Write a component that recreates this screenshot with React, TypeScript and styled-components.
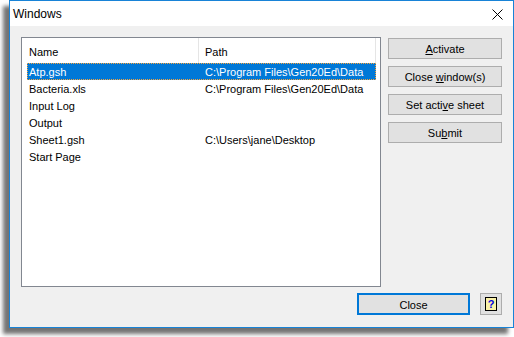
import React from 'react';
import styled, { createGlobalStyle } from 'styled-components';

type Item = {
  name: string;
  path: string;
};

const items: Item[] = [
  { name: 'Atp.gsh', path: 'C:\\Program Files\\Gen20Ed\\Data' },
  { name: 'Bacteria.xls', path: 'C:\\Program Files\\Gen20Ed\\Data' },
  { name: 'Input Log', path: '' },
  { name: 'Output', path: '' },
  { name: 'Sheet1.gsh', path: 'C:\\Users\\jane\\Desktop' },
  { name: 'Start Page', path: '' },
];

const GlobalStyle = createGlobalStyle`
  html, body {
    margin: 0;
    padding: 0;
    background: #ffffff;
  }
  body {
    font-family: "Liberation Sans", Arial, sans-serif;
    font-size: 11px;
    color: #000000;
  }
`;

const Page = styled.div`
  padding-left: 9px;
  width: 514px;
  height: 337px;
  box-sizing: border-box;
`;

const Window = styled.div`
  width: 505px;
  height: 328px;
  box-sizing: border-box;
  border: 1px solid #1883d7;
  background: #f0f0f0;
  display: flex;
  flex-direction: column;
  box-shadow: -6px 6px 4px rgba(0, 0, 0, 0.55);
`;

const TitleBar = styled.div`
  height: 25px;
  background: #ffffff;
  display: flex;
  align-items: center;
  justify-content: space-between;
  padding: 0 10px 0 3px;
  flex-shrink: 0;
`;

const Title = styled.span`
  font-size: 12px;
  margin-top: 1px;
`;

const CloseX = styled.svg`
  width: 11px;
  height: 11px;
  margin-top: 1px;
`;

const Body = styled.div`
  flex: 1;
  display: flex;
  flex-direction: column;
  padding: 11px;
`;

const TopRow = styled.div`
  display: flex;
  gap: 7px;
`;

const ListBox = styled.div`
  width: 360px;
  height: 250px;
  box-sizing: border-box;
  border: 1px solid #828790;
  background: #ffffff;
  padding-left: 5px;
`;

const Header = styled.div`
  display: flex;
  height: 25px;
`;

const HeaderCell = styled.div<{ $width: number; $pad: number }>`
  width: ${({ $width }) => $width}px;
  box-sizing: border-box;
  padding-left: ${({ $pad }) => $pad}px;
  display: flex;
  align-items: center;
  border-right: 1px solid #e5e5e5;
  padding-top: 2px;
`;

const Row = styled.div<{ $selected: boolean }>`
  display: flex;
  height: 17px;
  width: 349px;
  box-sizing: border-box;
  align-items: center;
  background: ${({ $selected }) => ($selected ? '#0078d7' : 'transparent')};
  color: ${({ $selected }) => ($selected ? '#ffffff' : '#000000')};
  outline: ${({ $selected }) => ($selected ? '1px dotted #f7a33c' : 'none')};
  outline-offset: -1px;
`;

const Cell = styled.div<{ $width: number; $pad: number }>`
  width: ${({ $width }) => $width}px;
  padding-left: ${({ $pad }) => $pad}px;
  box-sizing: border-box;
  white-space: nowrap;
  overflow: hidden;
`;

const ButtonColumn = styled.div`
  display: flex;
  flex-direction: column;
  gap: 7px;
  padding-top: 1px;
`;

const Button = styled.div<{ $width?: number; $default?: boolean }>`
  width: ${({ $width }) => $width ?? 114}px;
  height: ${({ $default }) => ($default ? 22 : 21)}px;
  box-sizing: border-box;
  background: #e1e1e1;
  border: ${({ $default }) => ($default ? '2px solid #0078d7' : '1px solid #adadad')};
  display: flex;
  align-items: center;
  justify-content: center;
  font-size: 11px;
`;

const Label = styled.span`
  white-space: pre;
  margin-top: 1px;
`;

const Key = styled.span`
  text-decoration: underline;
`;

const BottomRow = styled.div`
  display: flex;
  justify-content: flex-end;
  gap: 10px;
  margin-top: 6px;
`;

const HelpButton = styled.div`
  width: 22px;
  height: 22px;
  box-sizing: border-box;
  background: #e1e1e1;
  border: 1px solid #adadad;
  display: flex;
  align-items: center;
  justify-content: center;
`;

const HelpIcon = styled.span`
  width: 12px;
  height: 14px;
  box-sizing: border-box;
  border: 1px solid #000000;
  background-color: #fffde8;
  background-image: radial-gradient(#f2e25a 0.6px, transparent 0.8px);
  background-size: 2px 2px;
  color: #0000e0;
  font-weight: bold;
  font-size: 11px;
  line-height: 12px;
  text-align: center;
`;

export default function App() {
  return (
    <>
      <GlobalStyle />
      <Page>
        <Window>
          <TitleBar>
            <Title>Windows</Title>
            <CloseX viewBox="0 0 11 11">
              <path d="M0.5 0.5 L10.5 10.5 M10.5 0.5 L0.5 10.5" stroke="#000" strokeWidth="1" fill="none" />
            </CloseX>
          </TitleBar>
          <Body>
            <TopRow>
              <ListBox>
                <Header>
                  <HeaderCell $width={172} $pad={2}>Name</HeaderCell>
                  <HeaderCell $width={177} $pad={6}>Path</HeaderCell>
                </Header>
                {items.map((item, i) => (
                  <Row key={item.name} $selected={i === 0}>
                    <Cell $width={172} $pad={2}>{item.name}</Cell>
                    <Cell $width={177} $pad={6}>{item.path}</Cell>
                  </Row>
                ))}
              </ListBox>
              <ButtonColumn>
                <Button><Label><Key>A</Key>ctivate</Label></Button>
                <Button><Label>Close <Key>w</Key>indow(s)</Label></Button>
                <Button><Label>Set acti<Key>v</Key>e sheet</Label></Button>
                <Button><Label>Su<Key>b</Key>mit</Label></Button>
              </ButtonColumn>
            </TopRow>
            <BottomRow>
              <Button $width={113} $default><Label>Close</Label></Button>
              <HelpButton>
                <HelpIcon>?</HelpIcon>
              </HelpButton>
            </BottomRow>
          </Body>
        </Window>
      </Page>
    </>
  );
}
